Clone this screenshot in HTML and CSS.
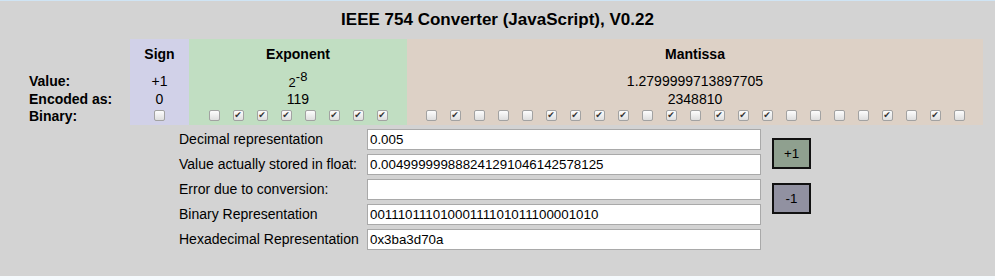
FILE: index.html
```html
<!DOCTYPE html>
<html lang="en">
<head>
    <meta charset="UTF-8">
    <meta name="viewport" content="width=device-width, initial-scale=1.0">
    <title>IEEE 754 Converter</title>
    <link rel="stylesheet" href="styles.css">
</head>
<body>
<div class="page">
    <h1>IEEE 754 Converter (JavaScript), V0.22</h1>

    <table class="bits-table">
        <colgroup>
            <col class="c-lbl">
            <col class="c-sign">
            <col class="c-exp">
            <col class="c-man">
        </colgroup>
        <tr class="row-head">
            <th class="lbl"></th>
            <th class="sign">Sign</th>
            <th class="exp">Exponent</th>
            <th class="man">Mantissa</th>
        </tr>
        <tr class="row-value">
            <td class="lbl">Value:</td>
            <td class="sign">+1</td>
            <td class="exp"><span class="pow">2<sup>-8</sup></span></td>
            <td class="man">1.2799999713897705</td>
        </tr>
        <tr class="row-enc">
            <td class="lbl">Encoded as:</td>
            <td class="sign">0</td>
            <td class="exp">119</td>
            <td class="man">2348810</td>
        </tr>
        <tr class="row-bin">
            <td class="lbl">Binary:</td>
            <td class="sign">
                <div class="bits">
                    <input type="checkbox" class="bit">
                </div>
            </td>
            <td class="exp">
                <div class="bits">
                    <input type="checkbox" class="bit">
                    <input type="checkbox" class="bit" checked>
                    <input type="checkbox" class="bit" checked>
                    <input type="checkbox" class="bit" checked>
                    <input type="checkbox" class="bit">
                    <input type="checkbox" class="bit" checked>
                    <input type="checkbox" class="bit" checked>
                    <input type="checkbox" class="bit" checked>
                </div>
            </td>
            <td class="man">
                <div class="bits">
                    <input type="checkbox" class="bit">
                    <input type="checkbox" class="bit" checked>
                    <input type="checkbox" class="bit">
                    <input type="checkbox" class="bit">
                    <input type="checkbox" class="bit">
                    <input type="checkbox" class="bit" checked>
                    <input type="checkbox" class="bit" checked>
                    <input type="checkbox" class="bit" checked>
                    <input type="checkbox" class="bit" checked>
                    <input type="checkbox" class="bit">
                    <input type="checkbox" class="bit" checked>
                    <input type="checkbox" class="bit">
                    <input type="checkbox" class="bit" checked>
                    <input type="checkbox" class="bit" checked>
                    <input type="checkbox" class="bit" checked>
                    <input type="checkbox" class="bit">
                    <input type="checkbox" class="bit">
                    <input type="checkbox" class="bit">
                    <input type="checkbox" class="bit">
                    <input type="checkbox" class="bit" checked>
                    <input type="checkbox" class="bit">
                    <input type="checkbox" class="bit" checked>
                    <input type="checkbox" class="bit">
                </div>
            </td>
        </tr>
    </table>

    <div class="conv">
        <label for="decimal">Decimal representation</label>
        <input type="text" id="decimal" value="0.005">

        <label for="stored">Value actually stored in float:</label>
        <input type="text" id="stored" value="0.004999999888241291046142578125">

        <label for="error">Error due to conversion:</label>
        <input type="text" id="error" value="">

        <label for="binary">Binary Representation</label>
        <input type="text" id="binary" value="00111011101000111101011100001010">

        <label for="hex">Hexadecimal Representation</label>
        <input type="text" id="hex" value="0x3ba3d70a">

        <div class="steps">
            <button class="step plus">+1</button>
            <button class="step minus">-1</button>
        </div>
    </div>
</div>
</body>
</html>
```

FILE: styles.css
```css
body {
    margin: 0;
    background-color: #f5fafd;
    border-top: 1px solid #cfe4f4;
    font-family: "Liberation Sans", Arial, sans-serif;
    color: #000;
}

.page {
    background-color: #d3d3d3;
    height: 275px;
    overflow: hidden;
}

h1 {
    margin: 0;
    padding-top: 9px;
    font-size: 17px;
    line-height: 20px;
    text-align: center;
}

/* tabela dos bits */
.bits-table {
    border-spacing: 0;
    table-layout: fixed;
    width: 955px;
    margin: 9px 0 0 28px;
    font-size: 14px;
}

.c-lbl { width: 102px; }
.c-sign { width: 59px; }
.c-exp { width: 218px; }
.c-man { width: 576px; }

.bits-table td,
.bits-table th {
    padding: 0 1px 1px;
    line-height: 16px;
    vertical-align: bottom;
    text-align: center;
}

.bits-table .lbl {
    text-align: left;
    font-weight: bold;
}

.row-head { height: 30px; }
.row-head th { vertical-align: middle; padding: 0 1px; }
.row-value { height: 21px; }
.row-enc { height: 18px; }
.row-bin { height: 17px; }

.sign { background-color: #d1d1e8; }
.exp { background-color: #c1dec2; }
.man { background-color: #ddd1c6; }

.pow {
    font-size: 13px;
    line-height: 0;
    vertical-align: -1px;
}

.pow sup {
    font-size: 13px;
    line-height: 0;
    vertical-align: 6px;
}

.bits {
    display: flex;
    justify-content: center;
    gap: 13px;
    height: 16px;
}

.bit {
    -webkit-appearance: none;
    appearance: none;
    box-sizing: border-box;
    width: 11px;
    height: 11px;
    margin: 2px 0 0;
    border: 1px solid #a2a2a2;
    border-radius: 2px;
    background: linear-gradient(#fdfdfd, #dedede);
}

.bit:checked::after {
    content: "\2714";
    display: block;
    font-family: "DejaVu Sans", sans-serif;
    font-size: 9px;
    line-height: 9px;
    text-align: center;
    color: #333;
}

/* formulario de conversao */
.conv {
    display: grid;
    grid-template-columns: 186px 394px auto;
    column-gap: 2px;
    row-gap: 4px;
    align-items: center;
    margin: 4px 0 0 179px;
    font-size: 14px;
}

.conv label {
    line-height: 16px;
    margin-top: -1px;
}

.conv input {
    box-sizing: border-box;
    width: 100%;
    height: 21px;
    margin: 0;
    padding: 0 2px;
    border: 1px solid #a9a9a9;
    background-color: #fff;
    font-family: "Liberation Sans", Arial, sans-serif;
    font-size: 13.33px;
    color: #000;
}

.steps {
    grid-column: 3;
    grid-row: 1 / span 5;
    align-self: start;
    display: flex;
    flex-direction: column;
    gap: 14px;
    margin: 9px 0 0 9px;
}

.step {
    width: 39px;
    height: 31px;
    padding: 0;
    border: 2px solid #111;
    font-family: "Liberation Sans", Arial, sans-serif;
    font-size: 13.33px;
    color: #000;
    cursor: pointer;
}

.plus { background-color: #8fa08f; }
.minus { background-color: #9191a1; }
```
